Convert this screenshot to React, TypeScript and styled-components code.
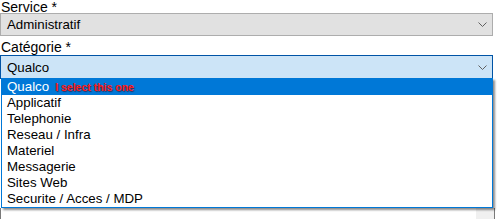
import React from "react";
import styled, { createGlobalStyle } from "styled-components";

const GlobalStyle = createGlobalStyle`
  body {
    margin: 0;
    background: #ffffff;
    font-family: "Liberation Sans", Arial, sans-serif;
    font-size: 13.3px;
    color: #000000;
  }
`;

const Form = styled.div`
  width: 494px;
  display: flex;
  flex-direction: column;
`;

const Field = styled.div`
  position: relative;
  display: flex;
  flex-direction: column;
`;

const Label = styled.label<{ $gap?: number }>`
  height: ${(p) => (p.$gap ? "16px" : "13px")};
  line-height: ${(p) => (p.$gap ? "16px" : "15px")};
  margin-top: ${(p) => p.$gap ?? 0}px;
  padding-left: 1px;
  font-size: 14px;
`;

// combo box, gray when idle and blue when focused
const Combo = styled.div<{ $focused?: boolean }>`
  height: ${(p) => (p.$focused ? "24px" : "23px")};
  box-sizing: border-box;
  width: 493px;
  border: 1px solid ${(p) => (p.$focused ? "#0054a6" : "#adadad")};
  background: ${(p) => (p.$focused ? "#cce4f7" : "#e1e1e1")};
  display: flex;
  align-items: center;
  justify-content: space-between;
  padding: 0 5px 0 6px;
`;

const Chevron = () => (
  <svg width="9" height="5" viewBox="0 0 9 5">
    <polyline points="0.5,0.5 4.5,4.5 8.5,0.5" fill="none" stroke="#606060" strokeWidth="1" />
  </svg>
);

// the opened option list lying over the field below
const OptionList = styled.ul`
  position: absolute;
  top: 100%;
  left: 1px;
  width: 492px;
  margin: -1px 0 0;
  padding: 0;
  list-style: none;
  box-sizing: border-box;
  border: 1px solid #0078d7;
  background: #ffffff;
  box-shadow: 2px 2px 2px rgba(0, 0, 0, 0.45);
  z-index: 2;
`;

const Option = styled.li<{ $selected?: boolean }>`
  height: 16px;
  line-height: 16px;
  padding-left: 5px;
  background: ${(p) => (p.$selected ? "#0078d7" : "transparent")};
  color: ${(p) => (p.$selected ? "#ffffff" : "#000000")};
  display: flex;
  align-items: center;
  gap: 6px;
`;

const Note = styled.span`
  color: #ff1a1a;
  font-weight: bold;
  font-size: 10.5px;
  text-shadow: 1px 1px 1px rgba(80, 0, 0, 0.6);
`;

const TextArea = styled.div`
  margin-top: 129px;
  height: 11px;
  width: 495px;
  box-sizing: border-box;
  border-left: 1px solid #7a7a7a;
  border-right: 1px solid #7a7a7a;
  display: flex;
  justify-content: flex-end;
`;

const ScrollTrack = styled.div`
  width: 18px;
  background: #f0f0f0;
`;

const options = [
  "Qualco",
  "Applicatif",
  "Telephonie",
  "Reseau / Infra",
  "Materiel",
  "Messagerie",
  "Sites Web",
  "Securite / Acces / MDP",
];

export default function App() {
  return (
    <>
      <GlobalStyle />
      <Form>
        <Label>Service *</Label>
        <Combo>
          <span>Administratif</span>
          <Chevron />
        </Combo>
        <Field>
          <Label $gap={3}>Catégorie *</Label>
          <Combo $focused>
            <span>Qualco</span>
            <Chevron />
          </Combo>
          <OptionList>
            {options.map((o, i) => (
              <Option key={o} $selected={i === 0}>
                {o}
                {i === 0 && <Note>I select this one</Note>}
              </Option>
            ))}
          </OptionList>
        </Field>
        <TextArea>
          <ScrollTrack />
        </TextArea>
      </Form>
    </>
  );
}
